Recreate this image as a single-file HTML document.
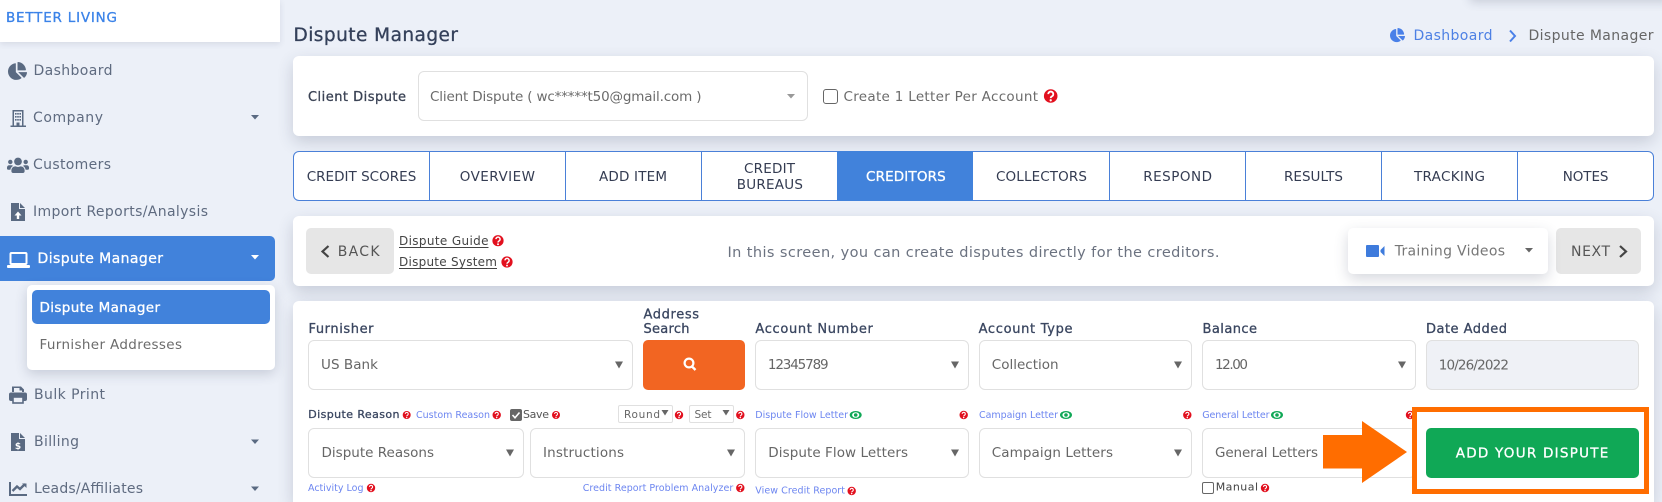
<!DOCTYPE html>
<html lang="en">
<head>
<meta charset="utf-8">
<title>Dispute Manager</title>
<style>
html,body{margin:0;padding:0;background:#ecf0f8;width:1662px;height:502px;overflow:hidden}
body{font-family:"DejaVu Sans","Liberation Sans",sans-serif}
#wrap{position:relative;width:1662px;height:502px;overflow:hidden;background:#ecf0f8}
.a{position:absolute;box-sizing:border-box}
.card{background:#fff;border-radius:6px;box-shadow:0 6px 16px rgba(50,60,90,.2)}
.box{background:#fff;border:1px solid #e0e0e0;border-radius:6px}
svg{position:absolute;left:0;top:0}
text{font-family:"DejaVu Sans","Liberation Sans",sans-serif;font-size:14px;fill:#5f6b80}
.m{stroke-width:.3;stroke:currentColor}
.s{font-size:9.5px;fill:#6d86f0}
.t{font-size:13.5px;fill:#343c52}
.l{font-size:13px;fill:#3a4660;color:#3a4660}
.v{font-size:13.5px;fill:#666}
</style>
</head>
<body>
<div id="wrap">
<div class="a" style="left:1470px;top:-20px;width:200px;height:20px;box-shadow:0 2px 10px rgba(50,60,90,.2)"></div>
<div class="a" style="left:0;top:0;width:280px;height:42px;background:#fff;box-shadow:0 2px 6px rgba(50,60,90,.12)"></div>
<div class="a" style="left:0;top:236px;width:275px;height:45px;background:#4182db;border-radius:0 5px 5px 0"></div>
<div class="a" style="left:27px;top:285px;width:248px;height:85px;background:#fff;border-radius:5px;box-shadow:0 4px 12px rgba(50,60,90,.2)"></div>
<div class="a" style="left:32px;top:290px;width:238px;height:34px;background:#4182db;border-radius:5px"></div>

<div class="a card" style="left:293px;top:56px;width:1361px;height:80px"></div>
<div class="a box" style="left:418px;top:71px;width:390px;height:50px"></div>
<div class="a" style="left:823px;top:89px;width:15px;height:15px;border:1px solid #666;border-radius:3px;background:#fff"></div>

<div class="a" style="left:293px;top:151px;width:1361px;height:50px;background:#fff;border:1px solid #4a80d8;border-radius:6px"></div>
<div class="a" style="left:837px;top:151px;width:136px;height:50px;background:#4182db"></div>
<div class="a" style="left:429px;top:151px;width:1px;height:50px;background:#4a80d8"></div>
<div class="a" style="left:565px;top:151px;width:1px;height:50px;background:#4a80d8"></div>
<div class="a" style="left:701px;top:151px;width:1px;height:50px;background:#4a80d8"></div>
<div class="a" style="left:1109px;top:151px;width:1px;height:50px;background:#4a80d8"></div>
<div class="a" style="left:1245px;top:151px;width:1px;height:50px;background:#4a80d8"></div>
<div class="a" style="left:1381px;top:151px;width:1px;height:50px;background:#4a80d8"></div>
<div class="a" style="left:1517px;top:151px;width:1px;height:50px;background:#4a80d8"></div>

<div class="a card" style="left:293px;top:216px;width:1361px;height:70px"></div>
<div class="a" style="left:306px;top:228px;width:88px;height:46px;background:#e6e6e6;border-radius:5px"></div>
<div class="a" style="left:1556px;top:228px;width:85px;height:46px;background:#e6e6e6;border-radius:5px"></div>
<div class="a" style="left:1348px;top:228px;width:200px;height:46px;background:#fff;border-radius:5px;box-shadow:0 5px 14px rgba(50,60,90,.2)"></div>

<div class="a card" style="left:293px;top:301px;width:1361px;height:201px;border-radius:6px 6px 0 0"></div>
<div class="a box" style="left:308px;top:340px;width:325px;height:50px"></div>
<div class="a" style="left:643px;top:340px;width:102px;height:50px;background:#f26522;border-radius:5px"></div>
<div class="a box" style="left:755px;top:340px;width:214px;height:50px"></div>
<div class="a box" style="left:979px;top:340px;width:213px;height:50px"></div>
<div class="a box" style="left:1202px;top:340px;width:214px;height:50px"></div>
<div class="a box" style="left:1426px;top:340px;width:213px;height:50px;background:#eff1f6"></div>
<div class="a box" style="left:308px;top:428px;width:216px;height:50px"></div>
<div class="a box" style="left:530px;top:428px;width:215px;height:50px"></div>
<div class="a box" style="left:755px;top:428px;width:214px;height:50px"></div>
<div class="a box" style="left:979px;top:428px;width:213px;height:50px"></div>
<div class="a box" style="left:1202px;top:428px;width:214px;height:50px"></div>
<div class="a" style="left:618px;top:405px;width:55px;height:18px;border:1px solid #e0e0e0;border-radius:2px"></div>
<div class="a" style="left:689px;top:405px;width:45px;height:18px;border:1px solid #e0e0e0;border-radius:2px"></div>
<div class="a" style="left:510px;top:409px;width:12px;height:12px;background:#666;border-radius:2px"></div>
<div class="a" style="left:1202px;top:482px;width:12px;height:12px;border:1px solid #666;border-radius:2px;background:#fff"></div>

<svg width="1662" height="502" viewBox="0 0 1662 502" xmlns="http://www.w3.org/2000/svg">
<defs>
<g id="q"><circle r="10" fill="#e2101e"/><path d="M-3.6-2.8a3.7 3.7 0 1 1 5.6 3.2c-1.4.8-2 1.4-2 2.8" fill="none" stroke="#fff" stroke-width="2.6"/><circle cy="6.3" r="1.7" fill="#fff"/></g>
<g id="e"><ellipse rx="6" ry="4" fill="#10a856"/><ellipse rx="3.6" ry="2.8" fill="#fff"/><circle r="1.8" fill="#10a856"/></g>
<path id="pie" d="M527.79 288H290.5l158.03 158.03c6.04 6.04 15.98 6.53 22.19.68 38.7-36.46 65.32-85.61 73.13-140.86 1.34-9.46-6.51-17.85-16.06-17.85zm-15.83-64.8C503.72 103.74 408.26 8.28 288.8.04 279.68-.59 272 7.1 272 16.24V240h223.77c9.14 0 16.82-7.68 16.19-16.8zM224 288V50.71c0-9.55-8.39-17.4-17.84-16.06C86.99 51.49-4.1 155.6.14 280.37 4.5 408.51 114.83 513.59 243.03 511.98c50.4-.63 96.97-16.87 135.26-44.03 7.9-5.6 8.42-17.23 1.57-24.08L224 288z"/>
</defs>

<!-- sidebar -->
<text class="m" x="6" y="22" textLength="111" style="font-size:13.5px;fill:#3a82e8;color:#3a82e8">BETTER LIVING</text>
<text x="33.5" y="75" textLength="79">Dashboard</text>
<text x="33" y="122" textLength="70">Company</text>
<text x="33" y="169" textLength="78">Customers</text>
<text x="33" y="216" textLength="175">Import Reports/Analysis</text>
<text class="m" x="37.5" y="263" textLength="125.5" style="fill:#fff;color:#fff">Dispute Manager</text>
<text class="m" x="39.5" y="312" textLength="120.5" style="font-size:13.5px;fill:#fff;color:#fff">Dispute Manager</text>
<text x="39.5" y="349" textLength="142.5" style="font-size:13.5px;fill:#6b6b6b">Furnisher Addresses</text>
<text x="34" y="399" textLength="71">Bulk Print</text>
<text x="34" y="446" textLength="45">Billing</text>
<text x="34" y="493" textLength="109">Leads/Affiliates</text>

<g fill="#5a6a82">
<use href="#pie" transform="translate(8 62) scale(.035)"/>
<path d="M10.5 125.5h2V110h11v15.5h2.500v1.500h-15.500zM14 111.500v14h2.500v-3h3v3H22v-14z" fill-rule="evenodd"/>
<path d="M15 113h1.600v1.600H15zM17.200 113h1.600v1.600h-1.600zM19.400 113h1.600v1.600h-1.600zM15 116h1.600v1.600H15zM17.200 116h1.600v1.600h-1.600zM19.400 116h1.600v1.600h-1.600zM15 119h1.600v1.600H15zM17.200 119h1.600v1.600h-1.600zM19.400 119h1.600v1.600h-1.600z"/>
<path transform="translate(7 156.500) scale(.0344)" d="M96 224c35.300 0 64-28.700 64-64s-28.700-64-64-64-64 28.700-64 64 28.700 64 64 64zm448 0c35.300 0 64-28.700 64-64s-28.700-64-64-64-64 28.700-64 64 28.700 64 64 64zm32 32h-64c-17.600 0-33.500 7.100-45.100 18.600 40.300 22.100 68.900 62 75.100 109.400h66c17.700 0 32-14.300 32-32v-32c0-35.300-28.700-64-64-64zm-256 0c61.900 0 112-50.100 112-112S381.900 32 320 32 208 82.100 208 144s50.100 112 112 112zm76.800 32h-8.300c-20.800 10-43.900 16-68.500 16s-47.600-6-68.500-16h-8.300C179.600 288 128 339.600 128 403.200V432c0 26.500 21.500 48 48 48h288c26.500 0 48-21.500 48-48v-28.800c0-63.600-51.600-115.200-115.200-115.200zm-223.700-13.400C161.500 263.100 145.600 256 128 256H64c-35.300 0-64 28.700-64 64v32c0 17.700 14.300 32 32 32h65.900c6.300-47.400 34.900-87.300 75.200-109.400z"/>
<path d="M11 203h8v6h6v12H11zM20 203l5 5h-5z"/>
<path d="M14.500 215.500l3.500-4 3.500 4h-2.300v3.500h-2.400v-3.500z" fill="#fff"/>
<path d="M12 392v-5.500h9l3 3V392h-2v-1.500h-2.500V388H14v4z"/>
<rect x="9" y="392.500" width="18" height="8.500" rx="2"/>
<rect x="13" y="397" width="10" height="6" fill="#ecf0f8" stroke="#5a6a82" stroke-width="1.600"/>
<path d="M11 433h8v6h6v12H11zM20 433l5 5h-5z"/>
<path d="M9 482h2v12h16v2H9z"/>
<path d="M12.500 491l4.500-4.500 3 2.500 5-5" fill="none" stroke="#5a6a82" stroke-width="2.400"/>
<path d="M22 483.500h4.500V488z"/>
</g>
<text x="18" y="449" style="font-size:9px;font-weight:700;fill:#fff" text-anchor="middle">$</text>
<rect x="10.500" y="253" width="16" height="11" rx="1" fill="none" stroke="#fff" stroke-width="2"/>
<rect x="7" y="265" width="23" height="3" rx="1" fill="#fff"/>
<g fill="#5a6a82">
<path d="M251 115h8l-4 4.500zM251 439.500h8l-4 4.500zM251 486.500h8l-4 4.500z"/>
</g>
<path d="M251 255h8l-4 4.500z" fill="#fff"/>

<!-- header -->
<text class="m" x="293.500" y="41" textLength="164.500" style="font-size:18.500px;fill:#34405a;color:#34405a">Dispute Manager</text>
<use href="#pie" transform="translate(1390 28) scale(.0276)" fill="#4a80e8"/>
<text x="1413.500" y="40" textLength="79" style="fill:#4d80e4">Dashboard</text>
<path d="M1510 30.500l5 5.500-5 5.500" fill="none" stroke="#4a80e8" stroke-width="2"/>
<text x="1528.500" y="40" textLength="125" style="fill:#666">Dispute Manager</text>

<!-- client row -->
<text class="l m" x="308" y="101" textLength="98" style="color:#3a4254;fill:#3a4254">Client Dispute</text>
<text x="430" y="101" textLength="271.500" style="font-size:13.500px;fill:#6b6b6b">Client Dispute ( wc*****t50@gmail.com )</text>
<path d="M787 94h8l-4 4.500z" fill="#999"/>
<text x="843.500" y="101" textLength="194.500" style="font-size:13.500px;fill:#6b6b6b">Create 1 Letter Per Account</text>
<use href="#q" transform="translate(1050.700 96) scale(.68)"/>

<!-- tabs -->
<text class="t" x="306.700" y="181" textLength="109.600">CREDIT SCORES</text>
<text class="t" x="459.700" y="181" textLength="75.300">OVERVIEW</text>
<text class="t" x="599" y="181" textLength="68">ADD ITEM</text>
<text class="t" x="744" y="173" textLength="51">CREDIT</text>
<text class="t" x="736.700" y="189" textLength="66.300">BUREAUS</text>
<text class="m" x="866" y="181" textLength="79.700" style="font-size:13.500px;fill:#fff;color:#fff">CREDITORS</text>
<text class="t" x="996" y="181" textLength="91">COLLECTORS</text>
<text class="t" x="1143.300" y="181" textLength="68.700">RESPOND</text>
<text class="t" x="1284" y="181" textLength="59">RESULTS</text>
<text class="t" x="1414" y="181" textLength="71">TRACKING</text>
<text class="t" x="1562.700" y="181" textLength="45.800">NOTES</text>

<!-- nav row -->
<path d="M328.500 246l-6 5.500 6 5.500" fill="none" stroke="#444" stroke-width="2.200"/>
<text x="337.700" y="256" textLength="41.800" style="fill:#555">BACK</text>
<text x="399" y="245" textLength="89.500" style="font-size:12px;fill:#444">Dispute Guide</text>
<path d="M399 247.500h89.500M399 268.500h98" stroke="#444" stroke-width="1"/>
<text x="399" y="266" textLength="98" style="font-size:12px;fill:#444">Dispute System</text>
<use href="#q" transform="translate(498 240.700) scale(.56)"/>
<use href="#q" transform="translate(507 262) scale(.56)"/>
<text x="727.500" y="257" textLength="492" style="font-size:14.500px;fill:#6b7280">In this screen, you can create disputes directly for the creditors.</text>
<rect x="1366" y="245" width="13" height="12" rx="1" fill="#3e7bdc"/>
<path d="M1380.500 250l4-4v10l-4-4z" fill="#3e7bdc"/>
<text x="1394.700" y="255.700" textLength="110.300" style="fill:#777">Training Videos</text>
<path d="M1525 248h8l-4 4.500z" fill="#666"/>
<text x="1571" y="256" textLength="39" style="fill:#555">NEXT</text>
<path d="M1620 246l6 5.500-6 5.500" fill="none" stroke="#444" stroke-width="2.200"/>

<!-- form row 1 -->
<text class="l m" x="308.500" y="333" textLength="65">Furnisher</text>
<text class="l m" x="643.500" y="318.700" textLength="55.500">Address</text>
<text class="l m" x="643.500" y="333" textLength="46">Search</text>
<text class="l m" x="755.400" y="333" textLength="117.500">Account Number</text>
<text class="l m" x="978.600" y="333" textLength="93.900">Account Type</text>
<text class="l m" x="1202.500" y="333" textLength="54.500">Balance</text>
<text class="l m" x="1426" y="333" textLength="81">Date Added</text>
<text class="v" x="321" y="369" textLength="57">US Bank</text>
<text class="v" x="767.900" y="369" textLength="60.700">12345789</text>
<text class="v" x="991.800" y="369" textLength="66.800">Collection</text>
<text class="v" x="1215" y="369" textLength="33">12.00</text>
<text class="v" x="1438.700" y="369.500" textLength="70.300">10/26/2022</text>
<g fill="#666">
<path d="M615 361.500h8l-4 7zM951 361.500h8l-4 7zM1174 361.500h8l-4 7zM1398 361.500h8l-4 7z"/>
<path d="M506 449.500h8l-4 7zM727 449.500h8l-4 7zM951 449.500h8l-4 7zM1174 449.500h8l-4 7zM661.500 410h7l-3.500 5.500zM722.500 410h7l-3.500 5.500z"/>
</g>
<circle cx="689" cy="363" r="4.400" fill="none" stroke="#fff" stroke-width="2.200"/>
<path d="M692 366.500l3.500 3.500" stroke="#fff" stroke-width="2.400"/>

<!-- form row 2 labels -->
<text class="m" x="308.300" y="418" textLength="91.200" style="font-size:11px;fill:#3a4660;color:#3a4660">Dispute Reason</text>
<use href="#q" transform="translate(406.700 415) scale(.4)"/>
<text class="s" x="416" y="418" textLength="74">Custom Reason</text>
<use href="#q" transform="translate(496.700 415) scale(.42)"/>
<path d="M512.500 415l2.500 2.800 4.500-5.300" fill="none" stroke="#fff" stroke-width="1.600"/>
<text x="523" y="418" textLength="26" style="font-size:11px;fill:#555">Save</text>
<use href="#q" transform="translate(556 415) scale(.4)"/>
<text x="624" y="418" textLength="36" style="font-size:10.500px;fill:#666">Round</text>
<use href="#q" transform="translate(679 415) scale(.42)"/>
<text x="694.500" y="418" textLength="17" style="font-size:10.500px;fill:#666">Set</text>
<use href="#q" transform="translate(740.300 415) scale(.42)"/>
<text class="s" x="755.300" y="418" textLength="92.700">Dispute Flow Letter</text>
<use href="#e" transform="translate(855.700 415)"/>
<use href="#q" transform="translate(963.700 415) scale(.42)"/>
<text class="s" x="979" y="418" textLength="79">Campaign Letter</text>
<use href="#e" transform="translate(1066 415)"/>
<use href="#q" transform="translate(1187.300 415) scale(.42)"/>
<text class="s" x="1202.300" y="418" textLength="67.200">General Letter</text>
<use href="#e" transform="translate(1277 415)"/>
<use href="#q" transform="translate(1410 415) scale(.42)"/>

<!-- form row 2 values -->
<text class="v" x="321.500" y="457" textLength="112.500">Dispute Reasons</text>
<text class="v" x="543" y="457" textLength="81">Instructions</text>
<text class="v" x="768.300" y="457" textLength="139.700">Dispute Flow Letters</text>
<text class="v" x="991.700" y="457" textLength="121.300">Campaign Letters</text>
<text class="v" x="1215" y="457" textLength="103">General Letters</text>

<!-- bottom links -->
<text class="s" x="308" y="491" textLength="55.500">Activity Log</text>
<use href="#q" transform="translate(371 488) scale(.42)"/>
<text class="s" x="582.700" y="491" textLength="150.600">Credit Report Problem Analyzer</text>
<use href="#q" transform="translate(740.300 488) scale(.42)"/>
<text class="s" x="755.300" y="493.700" textLength="89.700">View Credit Report</text>
<use href="#q" transform="translate(851.700 491) scale(.42)"/>
<text x="1215.700" y="490.700" textLength="42.300" style="font-size:11px;fill:#444">Manual</text>
<use href="#q" transform="translate(1265 488) scale(.42)"/>

<!-- highlight -->
<rect x="1414.500" y="409.500" width="232" height="82" fill="#fff" stroke="#ff6d00" stroke-width="5"/>
<rect x="1426" y="428" width="213" height="50" rx="5" fill="#10a856"/>
<text class="m" x="1455.700" y="457.700" textLength="152.600" style="font-size:13.500px;fill:#fff;color:#fff">ADD YOUR DISPUTE</text>
<path d="M1323 435h39v-14l45 31-45 31v-14.500h-39z" fill="#ff6d00"/>
</svg>
</div>
</body>
</html>
